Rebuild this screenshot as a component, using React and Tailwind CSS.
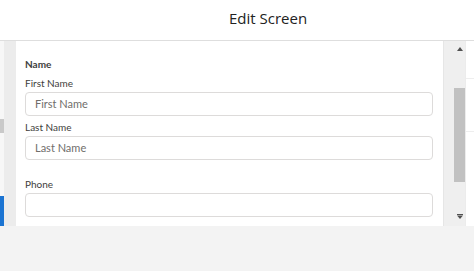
import React from "react";

function Field({ label, placeholder, mt }) {
  return (
    <div className={mt}>
      <div className="text-[10px] leading-[12px] text-[#3e3e3c] h-[12px]">{label}</div>
      <div className="mt-[3px] h-[24px] border border-[#dddbda] rounded-[4px] bg-white flex items-center pl-[9px] text-[11px] text-[#706e6b]">
        {placeholder}
      </div>
    </div>
  );
}

export default function App() {
  return (
    <div
      className="w-[474px] h-[271px] overflow-hidden bg-white flex flex-col"
      style={{ fontFamily: "Lato, 'Open Sans', sans-serif" }}
    >
      <div className="h-[41px] shrink-0 border-b border-[#dedede] flex items-center pl-[229px] pb-[4px]">
        <span
          className="text-[15px] text-[#222] leading-none"
          style={{ fontFamily: "'Open Sans', 'Noto Sans', sans-serif" }}
        >
          Edit Screen
        </span>
      </div>
      <div className="h-[185px] shrink-0 flex">
        <div className="w-[16px] flex">
          <div className="w-[4px] bg-[#f7f7f7] flex flex-col">
            <div className="h-[78px]" />
            <div className="h-[14px] bg-[#c9c9c9]" />
            <div className="h-[63px]" />
            <div className="h-[30px] w-[5px] bg-[#1b74d2]" />
          </div>
          <div className="flex-1 bg-[#ececec]" />
        </div>
        <div className="w-[427px] bg-white pl-[9px] pr-[10px] pt-[17px]">
          <div className="text-[10px] leading-[12px] font-bold text-[#3e3e3c]">Name</div>
          <Field label="First Name" placeholder="First Name" mt="mt-[7px]" />
          <Field label="Last Name" placeholder="Last Name" mt="mt-[5px]" />
          <Field label="Phone" placeholder="" mt="mt-[18px]" />
        </div>
        <div className="w-[22px] bg-[#efefef] border-l border-[#e6e6e6] flex flex-col items-end">
          <div className="w-[11px] h-[47px] flex justify-center pt-[6px]">
            <svg width="6" height="4" viewBox="0 0 6 4"><path d="M0 4 L3 0 L6 4 Z" fill="#505050" /></svg>
          </div>
          <div className="w-[11px] h-[94px] bg-[#c1c1c1]" />
          <div className="w-[11px] flex-1 flex justify-center items-end pb-[7px]">
            <svg width="6" height="5" viewBox="0 0 6 5"><path d="M0 0 H6 V1 H0 Z M0 1.5 L3 5 L6 1.5 Z" fill="#505050" /></svg>
          </div>
        </div>
        <div className="flex-1 bg-white border-l border-[#ececec] flex flex-col">
          <div className="h-[37px]" />
          <div className="border-b border-[#eeeeee]" />
          <div className="h-[52px]" />
          <div className="border-b border-[#eeeeee]" />
        </div>
      </div>
      <div className="flex-1 bg-[#f3f3f3]" />
    </div>
  );
}
